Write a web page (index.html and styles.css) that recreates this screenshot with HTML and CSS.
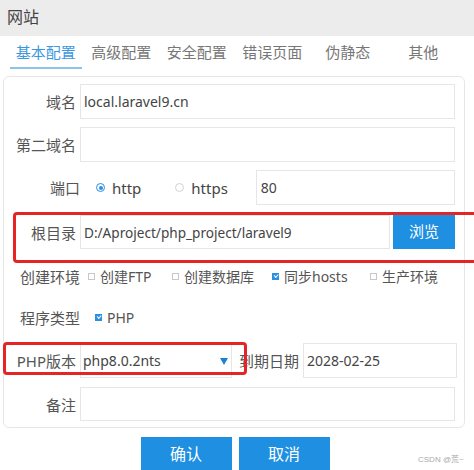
FILE: index.html
```html
<!DOCTYPE HTML>
<html lang="zh-CN">
<head>
    <meta charset="UTF-8">
    <title>网站</title>
    <link rel="stylesheet" href="styles.css">
</head>
<body>
<div class="page">
    <div class="title">网站</div>
    <ul class="tabs">
        <li class="active">基本配置</li>
        <li>高级配置</li>
        <li>安全配置</li>
        <li>错误页面</li>
        <li>伪静态</li>
        <li>其他</li>
    </ul>
    <div class="panel">
        <div class="row r1">
            <div class="label">域名</div>
            <div class="input wide">local.laravel9.cn</div>
        </div>
        <div class="row r2">
            <div class="label">第二域名</div>
            <div class="input wide"></div>
        </div>
        <div class="row r3">
            <div class="label lab2">端口</div>
            <div class="radios">
                <span class="radio on"></span><span class="rtext">http</span>
                <span class="radio"></span><span class="rtext last">https</span>
            </div>
            <div class="input port">80</div>
        </div>
        <div class="row r4">
            <div class="label">根目录</div>
            <div class="input path">D:/Aproject/php_project/laravel9</div>
            <div class="btn-browse">浏览</div>
        </div>
        <div class="row r5">
            <div class="label lab2">创建环境</div>
            <div class="checks">
                <div class="item w1"><span class="check"></span>创建FTP</div>
                <div class="item w2"><span class="check"></span>创建数据库</div>
                <div class="item w3"><span class="check on"></span>同步hosts</div>
                <div class="item"><span class="check"></span>生产环境</div>
            </div>
        </div>
        <div class="row r6">
            <div class="label lab2">程序类型</div>
            <div class="checks single">
                <div class="item"><span class="check on"></span>PHP</div>
            </div>
        </div>
        <div class="row r7">
            <div class="label">PHP版本</div>
            <div class="input select">php8.0.2nts<span class="arrow"></span></div>
            <div class="label2">到期日期</div>
            <div class="input date">2028-02-25</div>
        </div>
        <div class="row r8">
            <div class="label">备注</div>
            <div class="input wide"></div>
        </div>
    </div>
    <div class="buttons">
        <div class="btn">确认</div>
        <div class="btn">取消</div>
    </div>
    <!-- 标注框 -->
    <div class="mark mark1"></div>
    <div class="mark mark2"></div>
    <div class="water">CSDN @荒~</div>
</div>
</body>
</html>
```

FILE: styles.css
```css
body{
    margin:0;
    padding:0;
    background:#fff;
}
.page{
    position:relative;
    width:474px;
    height:470px;
    overflow:hidden;
    font-family:"Noto Sans","Noto Sans CJK SC",sans-serif;
    color:#555;
    white-space:nowrap;
}
.title{
    height:36px;
    line-height:34px;
    background:#ececec;
    padding-left:7px;
    font-size:16px;
    color:#444;
}
.tabs{
    list-style:none;
    margin:0;
    padding:0 0 0 8px;
    height:32px;
    display:flex;
}
.tabs li{
    width:75.5px;
    text-align:center;
    font-size:15px;
    line-height:32px;
    color:#777;
    position:relative;
}
.tabs li.active{
    color:#3c98de;
}
.tabs li.active:after{
    content:'';
    position:absolute;
    left:2px;
    right:2px;
    bottom:-1px;
    height:2px;
    background:#8fc4ea;
}
.panel{
    margin:8px 0 0 3px;
    width:462px;
    box-sizing:border-box;
    border:1px solid #e6e6e6;
    border-radius:6px;
    padding:7px 9px 6px 0;
}
.row{
    display:flex;
    align-items:center;
}
.row > *{flex-shrink:0;}
.r1{height:35px;}
.r2{height:35px;margin-top:8px;}
.r3{height:35px;margin-top:8px;}
.r4{height:34px;margin-top:10px;}
.r5{height:30px;margin-top:12px;}
.r6{height:30px;margin-top:11px;}
.r7{height:35px;margin-top:11px;}
.r8{height:34px;margin-top:9px;}
.label{
    width:72px;
    text-align:right;
    font-size:15px;
    margin-right:4px;
    color:#555;
}
.lab2{
    width:76px;
    margin-right:0;
}
.input{
    height:100%;
    box-sizing:border-box;
    border:1px solid #e6e6e6;
    font-size:14px;
    color:#444;
    padding-left:3px;
    display:flex;
    align-items:center;
}
.wide{width:375px;}
.port{width:199px;margin-left:28px;padding-left:4px;}
.path{width:310px;font-size:13.6px;}
.btn-browse{
    width:62px;
    height:34px;
    margin-left:3px;
    background:#1e8fe1;
    color:#fff;
    font-size:15px;
    line-height:33px;
    text-align:center;
}
.radios{
    display:flex;
    align-items:center;
    padding-left:16px;
    font-size:15px;
    color:#444;
}
.radio{
    width:9px;
    height:9px;
    box-sizing:border-box;
    border:1px solid #d2d2d2;
    border-radius:50%;
    margin-right:7px;
    position:relative;
}
.radio.on{
    border-color:#2c8fe0;
}
.radio.on:after{
    content:'';
    position:absolute;
    left:1.5px;
    top:1.5px;
    width:4px;
    height:4px;
    border-radius:50%;
    background:#2c8fe0;
}
.rtext{
    margin-right:34px;
}
.rtext.last{margin-right:0;}
.checks{
    display:flex;
    align-items:center;
    padding-left:8px;
    font-size:14px;
    color:#555;
}
.checks.single{padding-left:15px;}
.item{
    display:flex;
    align-items:center;
}
.w1{width:84px;}
.w2{width:100px;}
.w3{width:98px;}
.check{
    width:5px;
    height:5px;
    border:1px solid #c8c8c8;
    margin-right:5px;
    position:relative;
    flex-shrink:0;
}
.check.on{
    background:#2c8fe0;
    border-color:#2c8fe0;
}
.check.on:after{
    content:'';
    position:absolute;
    left:0.5px;
    top:0;
    width:3px;
    height:1.5px;
    border-left:1px solid #fff;
    border-bottom:1px solid #fff;
    transform:rotate(-45deg);
}
.select{
    width:152px;
    position:relative;
    padding-left:2px;
}
.arrow{
    position:absolute;
    right:3px;
    top:14px;
    width:0;
    height:0;
    border-left:4px solid transparent;
    border-right:4px solid transparent;
    border-top:7px solid #1f7fcf;
}
.label2{
    font-size:15px;
    margin:0 4px 0 7px;
    color:#555;
}
.date{width:154px;}
.buttons{
    display:flex;
    justify-content:center;
    gap:7px;
    margin-top:9px;
    padding-right:4px;
}
.btn{
    width:91px;
    height:36px;
    background:#1e8fe1;
    color:#fff;
    font-size:16px;
    line-height:35px;
    text-align:center;
}
.mark{
    position:absolute;
    border:3px solid #e52525;
    border-radius:4px;
    box-sizing:border-box;
}
.mark1{
    left:13px;
    top:212px;
    width:470px;
    height:51px;
}
.mark2{
    left:3px;
    top:342px;
    width:244px;
    height:33px;
}
.water{
    position:absolute;
    left:418px;
    top:453px;
    font-size:8px;
    color:#aaa;
    font-family:"Liberation Sans","Noto Sans CJK SC",sans-serif;
}
```
